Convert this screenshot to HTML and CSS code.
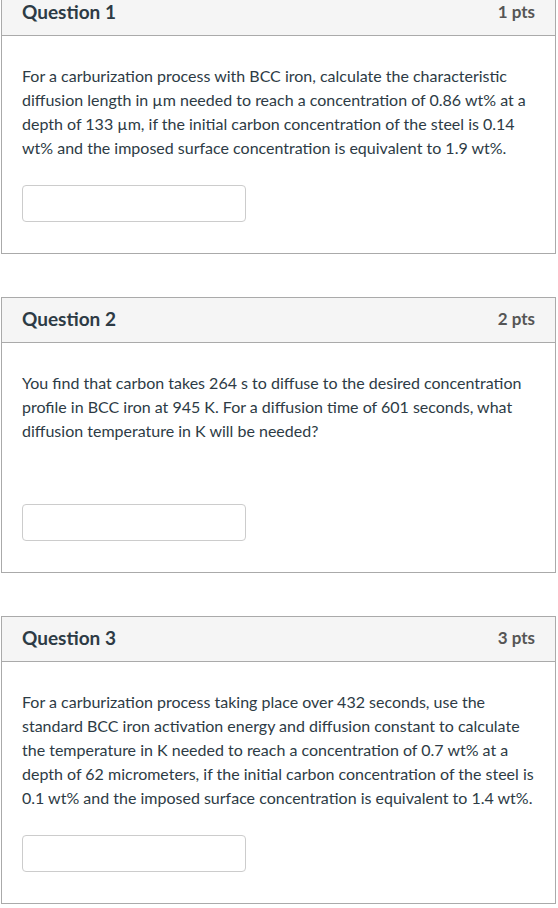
FILE: index.html
```html
<!DOCTYPE html>
<html lang="en">
<head>
<meta charset="utf-8">
<title>Quiz</title>
<link rel="stylesheet" href="styles.css">
</head>
<body>
<main class="quiz">
  <section class="question">
    <header class="question-header">
      <h2 class="question-title">Question 1</h2>
      <span class="question-points">1 pts</span>
    </header>
    <div class="question-body">
      <p class="question-text">For a carburization process with BCC iron, calculate the characteristic diffusion length in µm needed to reach a concentration of 0.86 wt% at a depth of 133 µm, if the initial carbon concentration of the steel is 0.14 wt% and the imposed surface concentration is equivalent to 1.9 wt%.</p>
      <input class="answer" type="text" aria-label="Answer for question 1">
    </div>
  </section>

  <section class="question">
    <header class="question-header">
      <h2 class="question-title">Question 2</h2>
      <span class="question-points">2 pts</span>
    </header>
    <div class="question-body">
      <p class="question-text question-text--spaced">You find that carbon takes 264 s to diffuse to the desired concentration profile in BCC iron at 945 K. For a diffusion time of 601 seconds, what diffusion temperature in K will be needed?</p>
      <input class="answer" type="text" aria-label="Answer for question 2">
    </div>
  </section>

  <section class="question">
    <header class="question-header">
      <h2 class="question-title">Question 3</h2>
      <span class="question-points">3 pts</span>
    </header>
    <div class="question-body">
      <p class="question-text">For a carburization process taking place over 432 seconds, use the standard BCC iron activation energy and diffusion constant to calculate the temperature in K needed to reach a concentration of 0.7 wt% at a depth of 62 micrometers, if the initial carbon concentration of the steel is 0.1 wt% and the imposed surface concentration is equivalent to 1.4 wt%.</p>
      <input class="answer" type="text" aria-label="Answer for question 3">
    </div>
  </section>
</main>
</body>
</html>
```

FILE: styles.css
```css
* {
  box-sizing: border-box;
}

html, body {
  margin: 0;
  padding: 0;
  background: #ffffff;
}

body {
  font-family: Lato, "Noto Sans", "Liberation Sans", sans-serif;
  color: #2d3b45;
}

.quiz {
  display: flex;
  flex-direction: column;
  gap: 43px;
  margin-top: -10px;
  margin-left: 1px;
  width: 555px;
}

.question {
  border: 1px solid #aaaaaa;
  background: #ffffff;
}

.question-header {
  height: 45px;
  display: flex;
  align-items: center;
  justify-content: space-between;
  padding: 0 20px 4px 20px;
  background: #f5f5f5;
  border-bottom: 1px solid #aaaaaa;
}

.question-title {
  margin: 0;
  font-size: 19px;
  font-weight: 700;
  color: #2d3b45;
  line-height: 1;
}

.question-points {
  font-size: 17px;
  font-weight: 700;
  color: #555555;
  line-height: 1;
}

.question-body {
  padding: 28px 20px 31px 20px;
}

.question-text {
  margin: 0 0 25px 0;
  font-size: 16px;
  line-height: 24px;
}

.question-text--spaced {
  margin-bottom: 61px;
}

.answer {
  display: block;
  width: 224px;
  height: 37px;
  margin: 0;
  padding: 0 8px;
  border: 1px solid #cccccc;
  border-radius: 4px;
  background: #ffffff;
  font-family: inherit;
  font-size: 16px;
}
```
